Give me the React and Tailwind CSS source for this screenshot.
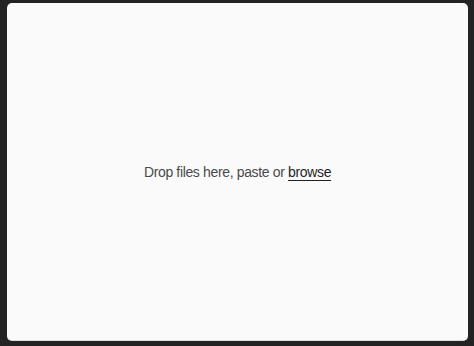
import React from 'react';

export default function App() {
  return (
    <div className="w-[474px] h-[346px] bg-[#232323] pt-[3px] pl-[7px] pr-[6px] pb-[5px] flex">
      <div className="flex-1 rounded-[5px] bg-[#fafafa] border-b border-[#dcdcdc] flex items-center justify-center">
        <p
          className="text-[14px] text-[#4a4a4a] tracking-[-0.35px] mt-[2px]"
          style={{ fontFamily: '"Liberation Sans", Arial, sans-serif' }}
        >
          Drop files here, paste or{' '}
          <span className="text-[#1f1f1f] underline underline-offset-[3px] cursor-pointer">browse</span>
        </p>
      </div>
    </div>
  );
}
